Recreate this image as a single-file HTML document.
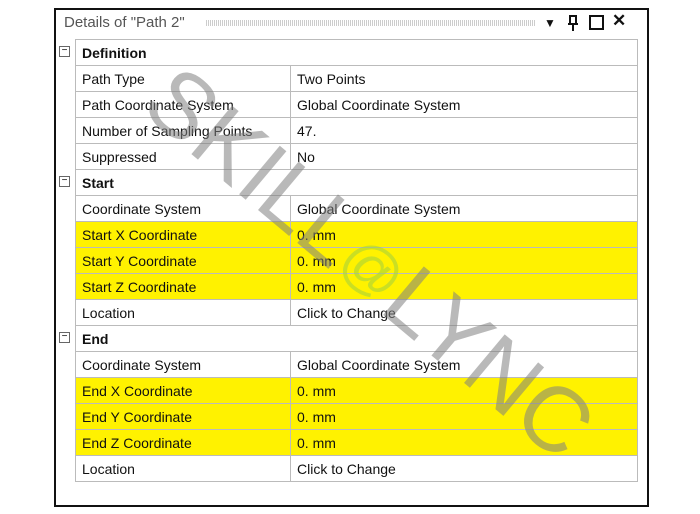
<!DOCTYPE html>
<html><head><style>
body{margin:0;width:700px;height:514px;background:#fff;position:relative;overflow:hidden;font-family:"Liberation Sans",sans-serif}
.frame{position:absolute;left:54px;top:8px;width:591px;height:495px;border:2px solid #111;background:#fff}
.title{position:absolute;left:64px;top:14px;font-size:15px;color:#555}
.dots{position:absolute;left:206px;top:20px;width:330px;height:6px;background:repeating-linear-gradient(90deg,#ccc 0 1px,transparent 1px 2px)}
.ic{position:absolute;top:12px;font-size:16px;color:#111}
table{position:absolute;left:75px;top:39px;border-collapse:collapse;font-size:14px;color:#111}
td{border:1px solid #bbb;height:25px;padding:0 0 0 6px;white-space:nowrap}
td.a{width:208px}td.b{width:340px}
tr.h td{font-weight:bold}
tr.y td{background:#fff200}
.m{position:absolute;left:59px;width:9px;height:9px;border:1px solid #666;background:#fff;font-size:10px;line-height:8px;text-align:center}
</style></head><body>
<div class="frame"></div>
<div class="title">Details of "Path 2"</div>
<div class="dots"></div>
<div class="ic" style="left:544px;font-size:12px;top:16px">▼</div>
<svg class="ic" style="left:566px;top:14px" width="14" height="18" viewBox="0 0 14 18"><path d="M3 2h8M4 2v8M10 2v8M2 10h10M7 10v7" stroke="#111" stroke-width="2" fill="none"/></svg>
<div class="ic" style="left:589px;top:15px;width:15px;height:15px;border:2px solid #111;box-sizing:border-box"></div>
<div class="ic" style="left:612px;font-weight:bold;top:11px;font-size:17px">✕</div>
<table>
<tr class="h"><td colspan="2">Definition</td></tr>
<tr><td class="a">Path Type</td><td class="b">Two Points</td></tr>
<tr><td class="a">Path Coordinate System</td><td>Global Coordinate System</td></tr>
<tr><td class="a">Number of Sampling Points</td><td>47.</td></tr>
<tr><td class="a">Suppressed</td><td>No</td></tr>
<tr class="h"><td colspan="2">Start</td></tr>
<tr><td class="a">Coordinate System</td><td>Global Coordinate System</td></tr>
<tr class="y"><td class="a">Start X Coordinate</td><td>0. mm</td></tr>
<tr class="y"><td class="a">Start Y Coordinate</td><td>0. mm</td></tr>
<tr class="y"><td class="a">Start Z Coordinate</td><td>0. mm</td></tr>
<tr><td class="a">Location</td><td>Click to Change</td></tr>
<tr class="h"><td colspan="2">End</td></tr>
<tr><td class="a">Coordinate System</td><td>Global Coordinate System</td></tr>
<tr class="y"><td class="a">End X Coordinate</td><td>0. mm</td></tr>
<tr class="y"><td class="a">End Y Coordinate</td><td>0. mm</td></tr>
<tr class="y"><td class="a">End Z Coordinate</td><td>0. mm</td></tr>
<tr><td class="a">Location</td><td>Click to Change</td></tr>
</table>
<div class="m" style="top:46px">−</div>
<div class="m" style="top:176px">−</div>
<div class="m" style="top:332px">−</div>
<svg width="700" height="514" style="position:absolute;left:0;top:0">
<text x="0" y="0" transform="translate(365,268) rotate(40)" text-anchor="middle" dominant-baseline="middle" font-family="Liberation Sans,sans-serif" font-size="92" fill="#808080" fill-opacity="0.55">SKILL<tspan fill="#9fd040" font-size="60">@</tspan>LYNC</text>
</svg>
</body></html>
